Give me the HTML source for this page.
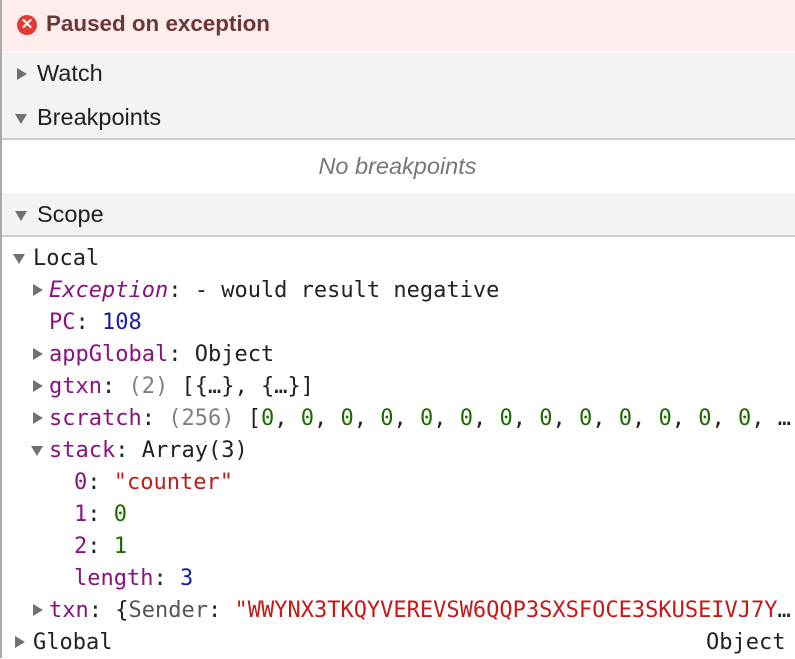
<!DOCTYPE html>
<html><head><meta charset="utf-8"><style>
body{margin:0;width:795px;height:658px;overflow:hidden;background:#fff;position:relative;font-family:"Liberation Sans",sans-serif}
.lb{position:absolute;left:0;top:0;width:2px;height:658px;background:#aaa}
.hdr{position:absolute;left:2px;top:0;width:793px;height:51px;background:#fdeded;}
.hdr .t{position:absolute;left:44px;top:11px;font-size:22.4px;font-weight:bold;color:#6e3535}
.ic{position:absolute;left:15px;top:15px;width:20px;height:20px;border-radius:50%;background:#e53935;color:#fff;font-size:15px;line-height:20px;text-align:center;font-weight:bold}
.sec{position:absolute;left:2px;width:793px;height:44px;background:#f1f3f4;color:#202124;font-size:23.5px}
.sec span{position:absolute;left:35px;top:8px}
.bb{border-bottom:2px solid #cacdd1}
.tr{position:absolute;width:0;height:0}
.r{border-top:6px solid transparent;border-bottom:6px solid transparent;border-left:10px solid #707070}
.d{border-left:6px solid transparent;border-right:6px solid transparent;border-top:10px solid #707070}
.nb{position:absolute;left:0;width:795px;top:153px;text-align:center;font-style:italic;color:#777;font-size:23.5px}
.row{position:absolute;font-family:"DejaVu Sans Mono","Liberation Mono",monospace;font-size:22px;white-space:nowrap;color:#222;line-height:32px}
.p{color:#881280}.s{color:#c41a16}.n{color:#1a1aa6}.g{color:#1c6b00}.m{color:#808080}.q{color:#555}
</style></head><body>
<div class="lb"></div>
<div class="hdr"><div class="ic">✕</div><div class="t">Paused on exception</div></div>
<div class="sec" style="top:52px"><div class="tr r" style="left:15px;top:16px"></div><span>Watch</span></div>
<div class="sec bb" style="top:96px;height:42px"><div class="tr d" style="left:13px;top:18px"></div><span>Breakpoints</span></div>
<div class="nb">No breakpoints</div>
<div class="sec bb" style="top:193px;height:42px"><div class="tr d" style="left:13px;top:18px"></div><span>Scope</span></div>

<div class="tr d" style="left:13px;top:254px"></div><div class="row" style="left:33px;top:243px">Local</div>
<div class="tr r" style="left:33px;top:284px"></div><div class="row" style="left:49px;top:275px"><i class="p">Exception</i>: - would result negative</div>
<div class="row" style="left:49px;top:307px"><span class="p">PC</span>: <span class="n">108</span></div>
<div class="tr r" style="left:33px;top:348px"></div><div class="row" style="left:49px;top:339px"><span class="p">appGlobal</span>: Object</div>
<div class="tr r" style="left:33px;top:380px"></div><div class="row" style="left:49px;top:371px"><span class="p">gtxn</span>: <span class="m">(2)</span> [{…}, {…}]</div>
<div class="tr r" style="left:33px;top:412px"></div><div class="row" style="left:49px;top:403px"><span class="p">scratch</span>: <span class="m">(256)</span> [<span class="g">0</span>, <span class="g">0</span>, <span class="g">0</span>, <span class="g">0</span>, <span class="g">0</span>, <span class="g">0</span>, <span class="g">0</span>, <span class="g">0</span>, <span class="g">0</span>, <span class="g">0</span>, <span class="g">0</span>, <span class="g">0</span>, <span class="g">0</span>, …</div>
<div class="tr d" style="left:31px;top:446px"></div><div class="row" style="left:49px;top:435px"><span class="p">stack</span>: Array(3)</div>
<div class="row" style="left:74px;top:467px"><span class="p">0</span>: <span class="s">"counter"</span></div>
<div class="row" style="left:74px;top:499px"><span class="p">1</span>: <span class="g">0</span></div>
<div class="row" style="left:74px;top:531px"><span class="p">2</span>: <span class="g">1</span></div>
<div class="row" style="left:74px;top:563px"><span class="p">length</span>: <span class="n">3</span></div>
<div class="tr r" style="left:33px;top:604px"></div><div class="row" style="left:49px;top:595px"><span class="p">txn</span>: {<span class="q">Sender</span>: <span class="s">"WWYNX3TKQYVEREVSW6QQP3SXSFOCE3SKUSEIVJ7Y</span>…</div>
<div class="tr r" style="left:15px;top:636px"></div><div class="row" style="left:33px;top:627px">Global</div>
<div class="row" style="left:706px;top:627px">Object</div>
</body></html>
